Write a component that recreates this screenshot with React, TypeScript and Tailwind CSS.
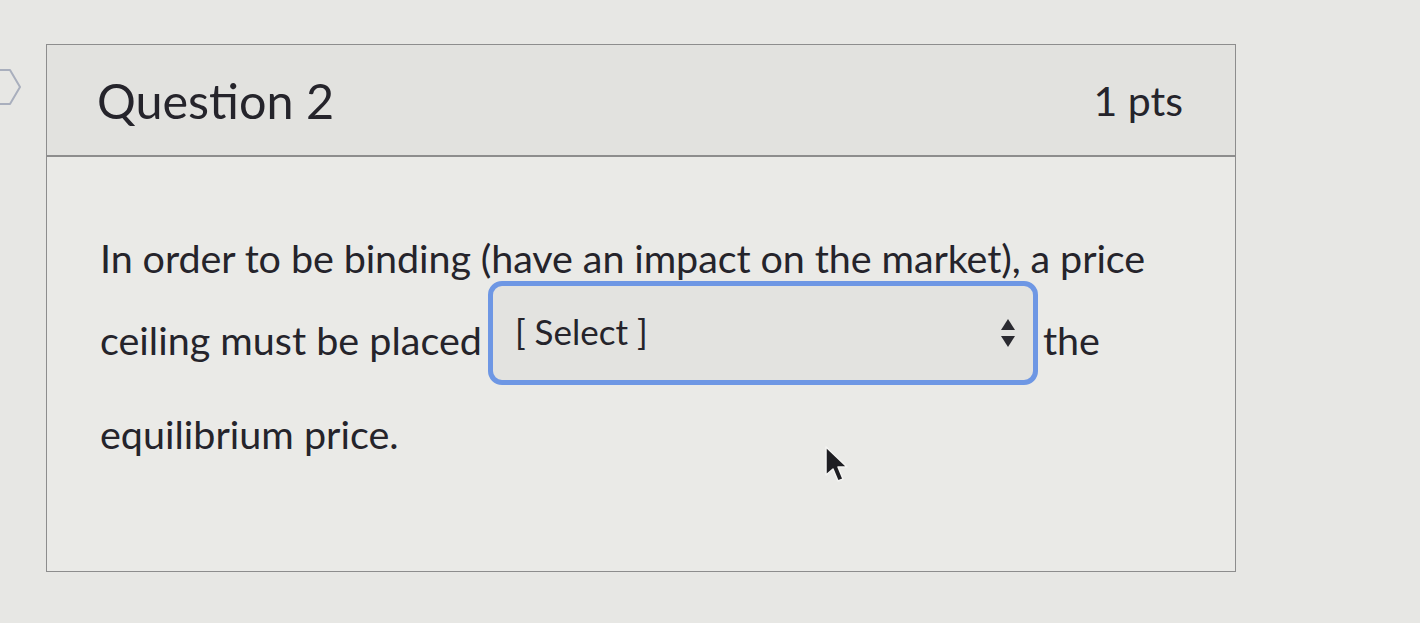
import React from "react";

const SelectArrows = () => (
  <svg width="18" height="32" viewBox="0 0 18 32" className="shrink-0">
    <path d="M9 2 L16 13 L2 13 Z" fill="#2a2a30" />
    <path d="M2 19 L16 19 L9 30 Z" fill="#2a2a30" />
  </svg>
);

const Cursor = () => (
  <svg
    width="28"
    height="40"
    viewBox="0 0 28 40"
    className="pointer-events-none absolute left-[823px] top-[445px]"
  >
    <path
      d="M3 2 L3 30 L10 24 L15 36 L20 34 L15 22 L24 22 Z"
      fill="#1e1e22"
      stroke="#f4f4f2"
      strokeWidth="1.5"
      strokeLinejoin="round"
    />
  </svg>
);

const App = () => {
  return (
    <div className="relative flex h-[623px] w-[1420px] overflow-hidden bg-[#e7e7e4] pt-[44px] font-['Lato','Liberation_Sans',sans-serif] text-[#25242b]">
      <div className="w-[46px] shrink-0 pt-[24px]">
        <svg width="24" height="38" viewBox="0 0 24 38">
          <path
            d="M-2 2 L10 2 L20 19 L10 36 L-2 36"
            fill="none"
            stroke="#a9afbd"
            strokeWidth="2"
            strokeLinejoin="round"
          />
        </svg>
      </div>

      <div className="h-[528px] w-[1190px] shrink-0 border border-[#8d8d8d] bg-[#eaeae7]">
        <div className="flex h-[112px] items-center justify-between border-b-2 border-[#8d8d8d] bg-[#e2e2df] pl-[50px] pr-[52px]">
          <h2 className="text-[48.5px] leading-none">Question 2</h2>
          <span className="text-[41px] leading-none">1 pts</span>
        </div>

        <div className="pl-[53px] pt-[71px] text-[39.5px]">
          <p className="h-[60px] whitespace-nowrap leading-[60px] tracking-[-0.1px]">
            In order to be binding (have an impact on the market), a price
          </p>
          <div className="-mt-[7px] flex items-start">
            <span className="mt-[39px] whitespace-nowrap leading-[40px]">
              ceiling must be placed
            </span>
            <div className="ml-[6px] flex h-[104px] w-[550px] shrink-0 items-center justify-between rounded-[14px] border-[5px] border-[#6e97e4] bg-[#e3e3e0] pl-[22px] pr-[16px]">
              <span className="-mt-[4px] text-[35px] leading-none">
                [ Select ]
              </span>
              <SelectArrows />
            </div>
            <span className="ml-[5px] mt-[39px] leading-[40px]">the</span>
          </div>
          <p className="mt-[19px] h-[60px] leading-[60px]">
            equilibrium price.
          </p>
        </div>
      </div>

      <Cursor />
    </div>
  );
};

export default App;
